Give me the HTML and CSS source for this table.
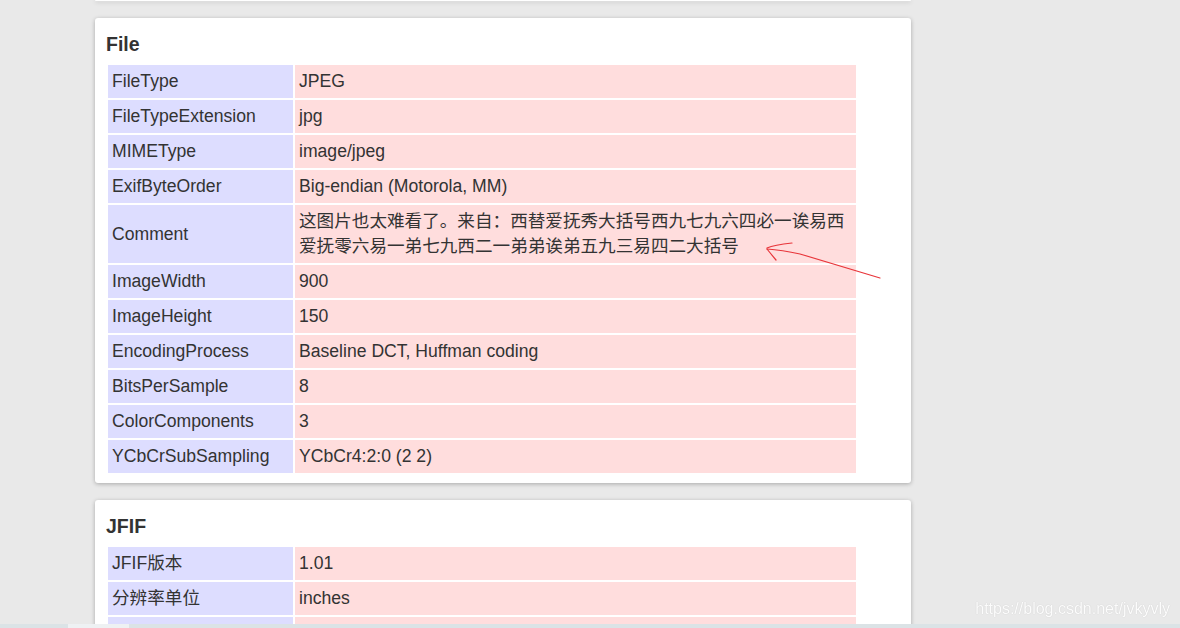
FILE: index.html
```html
<!DOCTYPE html>
<html lang="zh-CN">
<head>
    <meta charset="UTF-8">
    <meta name="viewport" content="width=device-width, initial-scale=1.0">
    <title>图片信息</title>
    <link rel="stylesheet" href="styles.css">
</head>
<body>
    <div class="page">
        <div class="card stub"></div>

        <div class="card">
            <h3>File</h3>
            <table>
                <colgroup><col class="c-key"><col></colgroup>
                <tr><td class="k">FileType</td><td class="v">JPEG</td></tr>
                <tr><td class="k">FileTypeExtension</td><td class="v">jpg</td></tr>
                <tr><td class="k">MIMEType</td><td class="v">image/jpeg</td></tr>
                <tr><td class="k">ExifByteOrder</td><td class="v">Big-endian (Motorola, MM)</td></tr>
                <tr><td class="k">Comment</td><td class="v">这图片也太难看了。来自：西替爱抚秀大括号西九七九六四必一诶易西爱抚零六易一弟七九西二一弟弟诶弟五九三易四二大括号</td></tr>
                <tr><td class="k">ImageWidth</td><td class="v">900</td></tr>
                <tr><td class="k">ImageHeight</td><td class="v">150</td></tr>
                <tr><td class="k">EncodingProcess</td><td class="v">Baseline DCT, Huffman coding</td></tr>
                <tr><td class="k">BitsPerSample</td><td class="v">8</td></tr>
                <tr><td class="k">ColorComponents</td><td class="v">3</td></tr>
                <tr><td class="k">YCbCrSubSampling</td><td class="v">YCbCr4:2:0 (2 2)</td></tr>
            </table>
        </div>

        <div class="card">
            <h3>JFIF</h3>
            <table>
                <colgroup><col class="c-key"><col></colgroup>
                <tr><td class="k">JFIF版本</td><td class="v">1.01</td></tr>
                <tr><td class="k">分辨率单位</td><td class="v">inches</td></tr>
                <tr><td class="k">X分辨率</td><td class="v">72</td></tr>
            </table>
        </div>
    </div>

    <!-- 手画的箭头 -->
    <svg class="arrow" width="130" height="50" viewBox="0 0 130 50">
        <path d="M120 43 L40 19 Q22 15 7 14" />
        <path d="M7 13 Q14 10 32 8" />
        <path d="M7 14 Q11 19 16 25" />
    </svg>

    <div class="watermark">https://blog.csdn.net/jvkyvly</div>
    <div class="hscroll"><div class="thumb"></div></div>
</body>
</html>
```

FILE: styles.css
```css
html, body {
    height: 100%;
    overflow: hidden;
}
body {
    margin: 0;
    background-color: #e9e9e9;
    font-family: "Liberation Sans", Arial, "Noto Sans CJK SC", sans-serif;
    color: #333;
}
.page {
    width: 816px;
    margin-left: 95px;
}
.card {
    background: #fff;
    border-radius: 3px;
    box-shadow: 0 1px 4px rgba(0, 0, 0, 0.28);
    padding: 14px 11px 8px;
    margin-bottom: 17px;
}
.card.stub {
    height: 1px;
    padding: 0;
    border-radius: 0 0 3px 3px;
}
h3 {
    margin: 0 0 7px;
    font-size: 19.5px;
    line-height: 24px;
    font-weight: bold;
}
table {
    width: 752px;
    table-layout: fixed;
    border-spacing: 2px;
    margin: 0;
}
.c-key {
    width: 185px;
}
td {
    padding: 4px;
    font-size: 17.6px;
    line-height: 25px;
    vertical-align: middle;
}
td.k {
    background-color: #ddddff;
}
td.v {
    background-color: #ffdddd;
}
.arrow {
    position: absolute;
    left: 760px;
    top: 235px;
    fill: none;
    stroke: #e8353a;
    stroke-width: 1.2;
    stroke-linecap: round;
}
.watermark {
    position: fixed;
    right: 10px;
    bottom: 10px;
    font-size: 16px;
    color: rgba(255, 255, 255, 0.95);
    text-shadow: 0 0 1px rgba(0, 0, 0, 0.2);
}
.hscroll {
    position: fixed;
    left: 0;
    right: 0;
    bottom: 0;
    height: 4px;
    background: #dbe3e6;
}
.hscroll .thumb {
    margin-left: 68px;
    width: 61px;
    height: 4px;
    background: #eef1f3;
}
```
